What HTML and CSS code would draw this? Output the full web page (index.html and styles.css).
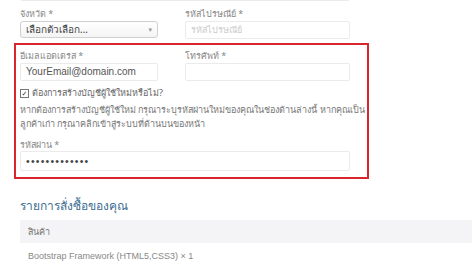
FILE: index.html
```html
<!DOCTYPE html>
<html lang="th">
<head>
    <meta charset="UTF-8">
    <title>Checkout</title>
    <link rel="stylesheet" href="styles.css">
</head>
<body>
    <div class="checkout">
        <div class="field-top"><div class="input"></div></div>

        <div class="row">
            <div class="field col-left">
                <label>จังหวัด *</label>
                <div class="select">เลือกตัวเลือก...<span class="caret">▾</span></div>
            </div>
            <div class="field col-right">
                <label>รหัสไปรษณีย์ *</label>
                <div class="input placeholder">รหัสไปรษณีย์</div>
            </div>
        </div>

        <div class="highlight">
            <div class="row">
                <div class="field col-left">
                    <label>อีเมลแอดเดรส *</label>
                    <div class="input value">YourEmail@domain.com</div>
                </div>
                <div class="field col-right">
                    <label>โทรศัพท์ *</label>
                    <div class="input"></div>
                </div>
            </div>
            <div class="check-row">
                <span class="checkbox">✓</span>
                <span>ต้องการสร้างบัญชีผู้ใช้ใหม่หรือไม่?</span>
            </div>
            <p class="note">หากต้องการสร้างบัญชีผู้ใช้ใหม่ กรุณาระบุรหัสผ่านใหม่ของคุณในช่องด้านล่างนี้ หากคุณเป็น<br>ลูกค้าเก่า กรุณาคลิกเข้าสู่ระบบที่ด้านบนของหน้า</p>
            <div class="field">
                <label>รหัสผ่าน *</label>
                <div class="input value password">•••••••••••••</div>
            </div>
        </div>

        <h3 class="order-title">รายการสั่งซื้อของคุณ</h3>
        <div class="order-table">
            <div class="order-head">สินค้า</div>
            <div class="order-row">Bootstrap Framework (HTML5,CSS3) × 1</div>
        </div>
    </div>
</body>
</html>
```

FILE: styles.css
```css
body {
    margin: 0;
    font-family: "Noto Sans", "DejaVu Sans", sans-serif;
    font-size: 10px;
    color: #777;
    background: #fff;
}
.checkout {
    padding-left: 20px;
    width: 452px;
}
.field-top {
    width: 330px;
    margin-top: -17px;
}
.input,
.select {
    box-sizing: border-box;
    height: 18px;
    border: 1px solid #ebebeb;
    border-radius: 2px;
    background: #fff;
    padding: 0 5px;
    line-height: 16px;
    font-size: 10px;
}
.row {
    display: flex;
    gap: 27px;
    width: 330px;
}
.col-left {
    width: 138px;
}
.col-right {
    width: 165px;
}
.field label {
    display: block;
    height: 11px;
    line-height: 11px;
    font-size: 9px;
    color: #888;
    margin-bottom: 2px;
}
.row .field label {
    margin-top: 7px;
}
.select {
    display: flex;
    justify-content: space-between;
    color: #444;
    height: 17px;
    line-height: 15px;
    border-color: #d0d0d0;
    border-radius: 3px;
    background: linear-gradient(#fff, #f4f4f4);
}
.caret {
    font-size: 7px;
    color: #999;
}
.placeholder {
    color: #ccc;
    font-size: 9px;
}
.value {
    font-family: "Liberation Sans", Arial, sans-serif;
    color: #555;
    font-size: 10px;
}
.highlight {
    box-sizing: border-box;
    margin-top: 4px;
    margin-left: -6px;
    width: 355px;
    border: 2px solid #d9262c;
    padding: 0 17px 6px 4px;
}
.highlight .row .field label {
    margin-top: 5px;
}
.check-row {
    display: flex;
    align-items: center;
    gap: 3px;
    margin-top: 5px;
    height: 14px;
    font-size: 9px;
    color: #666;
}
.checkbox {
    box-sizing: border-box;
    width: 9px;
    height: 9px;
    border: 1px solid #777;
    font-size: 7px;
    line-height: 7px;
    text-align: center;
    color: #333;
}
.note {
    margin: 3px 0 0;
    font-size: 9px;
    line-height: 14px;
    color: #777;
    white-space: nowrap;
}
.highlight > .field label {
    margin-top: 8px;
    margin-bottom: 1px;
}
.password {
    height: 20px;
    font-size: 10.5px;
    letter-spacing: 1.2px;
    color: #444;
    line-height: 18px;
}
.order-title {
    margin: 15px 0 0;
    height: 24px;
    font-size: 12px;
    line-height: 24px;
    font-weight: normal;
    color: #3d6d90;
}
.order-table {
    margin-top: 2px;
}
.order-head {
    height: 23px;
    line-height: 23px;
    background: #f4f4f6;
    padding-left: 8px;
    font-size: 9px;
    color: #777;
}
.order-row {
    padding-left: 8px;
    height: 26px;
    line-height: 26px;
    font-family: "Liberation Sans", Arial, sans-serif;
    font-size: 9px;
    color: #888;
}
```
